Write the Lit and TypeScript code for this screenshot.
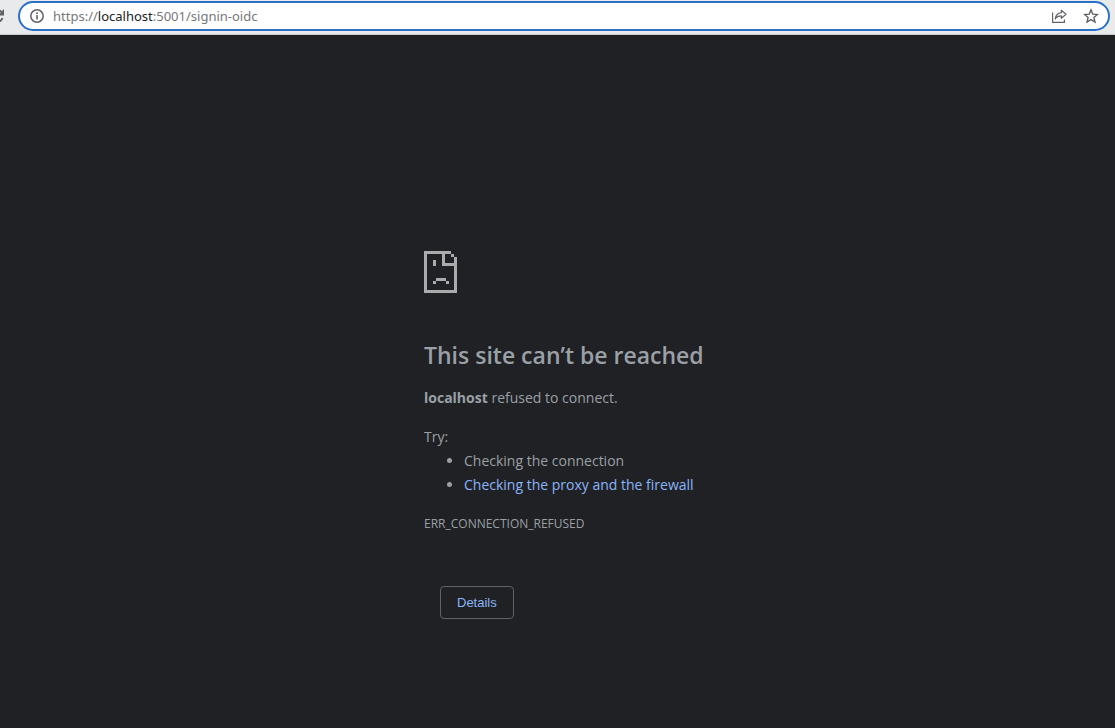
import { LitElement, html, css } from "lit";
import { customElement } from "lit/decorators.js";

@customElement("address-bar")
class AddressBar extends LitElement {
  static styles = css`
    :host {
      display: block;
    }
    .toolbar {
      display: flex;
      align-items: center;
      gap: 13px;
      padding: 1px 5px 3px 0;
      background: #e9eaeb;
      border-bottom: 1px solid #c8cacc;
      font-family: "Segoe UI", "Noto Sans", sans-serif;
    }
    button {
      display: flex;
      padding: 0;
      border: 0;
      background: none;
      color: #5f6368;
    }
    .reload {
      width: 5px;
      overflow: hidden;
      justify-content: flex-end;
    }
    svg {
      display: block;
      flex: none;
    }
    .field {
      flex: 1;
      display: flex;
      align-items: center;
      box-sizing: border-box;
      height: 30px;
      padding: 0 9px;
      border: 2px solid #2a70c8;
      border-radius: 15px;
      background: #fff;
    }
    .url {
      flex: 1;
      padding-left: 8px;
      font-size: 13px;
      line-height: 20px;
      color: #74787c;
      white-space: nowrap;
    }
    .host {
      color: #202124;
    }
    .actions {
      display: flex;
      gap: 16px;
    }
  `;

  render() {
    return html`
      <div class="toolbar">
        <button class="reload" aria-label="Reload">
          <svg width="16" height="16" viewBox="0 0 16 16" fill="none" stroke="currentColor" stroke-width="2">
            <path d="M13.5 10A6 6 0 1 1 12.5 4.2" />
            <path d="M15 1v6.5H9z" fill="currentColor" stroke="none" />
          </svg>
        </button>
        <div class="field">
          <button aria-label="View site information">
            <svg width="16" height="16" viewBox="0 0 16 16" fill="none" stroke="currentColor">
              <circle cx="8" cy="8" r="6.2" stroke-width="1.5" />
              <path d="M8 7v4.5M8 4.3v1.6" stroke-width="1.6" />
            </svg>
          </button>
          <div class="url">https://<span class="host">localhost</span>:5001/signin-oidc</div>
          <div class="actions">
            <button aria-label="Share this page">
              <svg width="16" height="16" viewBox="0 0 16 16" fill="none" stroke="currentColor" stroke-width="1.2">
                <path d="M1.6 4.5v9.9h11.8v-3" />
                <path d="M10.3 2.3 15 6.3l-4.7 4V7.900C7.400 7.900 5.600 8.900 4.200 11c.5-3.300 2.600-5.900 6.100-6.300z" stroke-linejoin="round" />
              </svg>
            </button>
            <button aria-label="Bookmark this tab">
              <svg width="16" height="16" viewBox="0 0 16 16" fill="none" stroke="currentColor" stroke-width="1.4">
                <path d="m8 1.900 1.800 4.200 4.600.4-3.500 3 1.100 4.500L8 11.600 4 14l1.100-4.500-3.500-3 4.600-.4z" />
              </svg>
            </button>
          </div>
        </div>
      </div>
    `;
  }
}

@customElement("error-page")
class ErrorPage extends LitElement {
  static styles = css`
    :host {
      display: block;
      color: #9aa0a6;
      font-family: "Segoe UI", "Open Sans", sans-serif;
      font-size: 14px;
      line-height: 24px;
    }
    main {
      max-width: 600px;
      padding: 216px 16px 16px 424px;
    }
    .icon {
      display: block;
      color: #a9abad;
    }
    h1 {
      margin: 46px 0 15px;
      font-size: 23px;
      font-weight: 600;
      line-height: 32px;
    }
    p {
      margin: 0;
    }
    .try {
      margin-top: 15px;
    }
    ul {
      margin: 0;
      padding-left: 40px;
    }
    a {
      color: #8ab4f8;
      text-decoration: none;
    }
    .code {
      margin-top: 17px;
      font-size: 12px;
      line-height: 20px;
    }
    .details {
      margin: 52px 0 0 16px;
      padding: 8px 16px;
      border: 1px solid #5f6368;
      border-radius: 4px;
      background: none;
      color: #8ab4f8;
      font: 13px/15px "Liberation Sans", Arial, sans-serif;
    }
  `;

  render() {
    return html`
      <main>
        <svg class="icon" width="33" height="42" viewBox="0 0 33 42" fill="currentColor" shape-rendering="crispEdges" aria-hidden="true">
          <path d="M0 0h27v3h-6v9h9V6h3v36H0zM3 3v36h27V15H18V3z" fill-rule="evenodd" />
          <path d="M27 3h3v3h-3zM9 9h3v6H9zM12 27h10v3H12zM9 30h3v3H9zM22 30h3v3h-3z" />
        </svg>
        <h1>This site can’t be reached</h1>
        <p><strong>localhost</strong> refused to connect.</p>
        <p class="try">Try:</p>
        <ul>
          <li>Checking the connection</li>
          <li><a href="#buttons">Checking the proxy and the firewall</a></li>
        </ul>
        <p class="code">ERR_CONNECTION_REFUSED</p>
        <button class="details">Details</button>
      </main>
    `;
  }
}

@customElement("app-root")
class AppRoot extends LitElement {
  static styles = css`
    :host {
      display: block;
      min-height: 100vh;
      background: #202124;
    }
  `;

  render() {
    return html`<address-bar></address-bar><error-page></error-page>`;
  }
}
